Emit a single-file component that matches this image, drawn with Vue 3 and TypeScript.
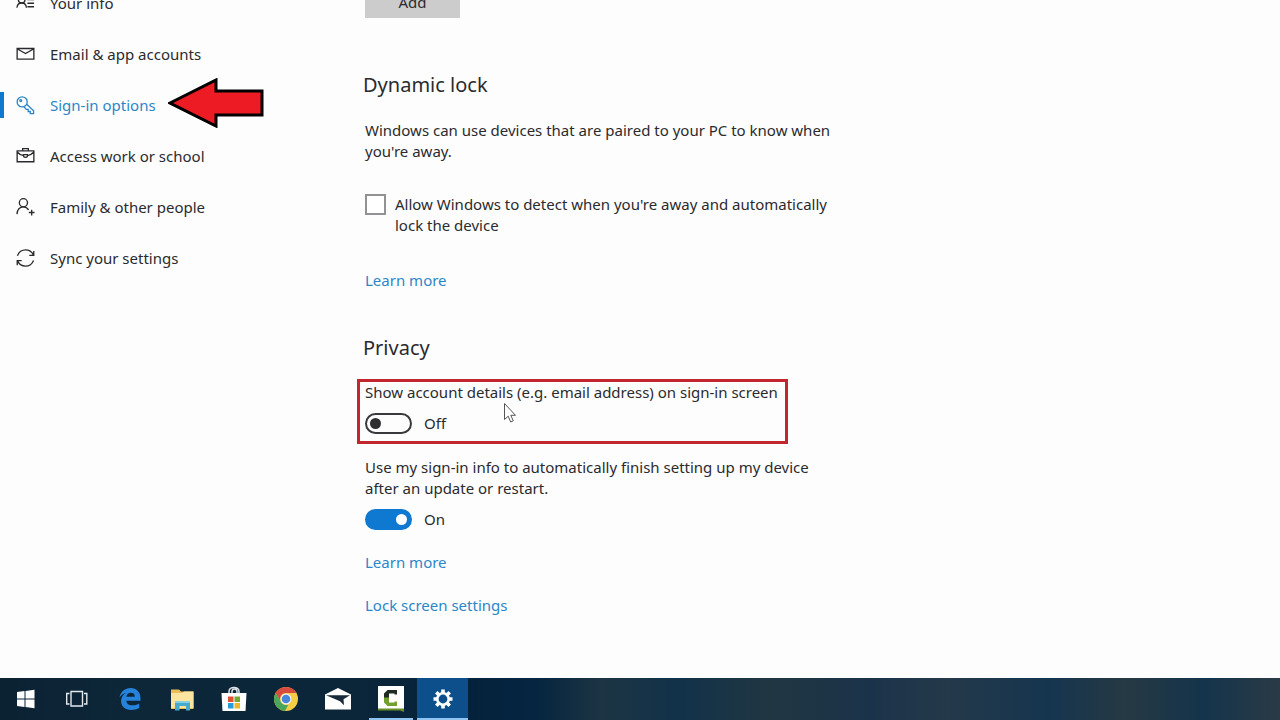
<script setup lang="ts">
import { ref } from 'vue'

interface NavEntry {
  id: string
  label: string
}

const entries: NavEntry[] = [
  { id: 'info', label: 'Your info' },
  { id: 'mail', label: 'Email & app accounts' },
  { id: 'signin', label: 'Sign-in options' },
  { id: 'work', label: 'Access work or school' },
  { id: 'family', label: 'Family & other people' },
  { id: 'sync', label: 'Sync your settings' },
]

const current = ref('signin')
const dynamicLock = ref(false)
const showDetails = ref(false)
const useSignIn = ref(true)
</script>

<template>
  <div class="screen">
    <div class="window">
      <nav class="sidebar" aria-label="Accounts">
        <a
          v-for="entry in entries"
          :key="entry.id"
          href="#"
          class="nav-item"
          :class="{ active: current === entry.id }"
          @click.prevent="current = entry.id"
        >
          <svg class="nav-icon" viewBox="0 0 20 20" aria-hidden="true">
            <g v-if="entry.id === 'info'">
              <circle cx="6" cy="6" r="3.500" />
              <path d="M1 14.500c.3-3 2-5 5-5s4.700 2 5 5M12 6h7M12 9.700h7M12 13.400h7" />
            </g>
            <g v-else-if="entry.id === 'mail'">
              <path d="M1.200 3.700h17.600v11.200H1.200zM1.500 4.200L10 9l8.500-4.800" />
            </g>
            <g v-else-if="entry.id === 'signin'">
              <circle cx="6.500" cy="6.200" r="5.300" />
              <circle cx="5" cy="4.800" r="1" />
              <path d="M11.300 8.700l7.200 6.800v3h-3.500v-2.200h-2.200v-2.200h-2l-2.300-2.600" />
            </g>
            <g v-else-if="entry.id === 'work'">
              <path d="M1.200 4h17.600v11.500H1.200zM7 4V1.700h6V4M1.500 5.500c2.200 2.500 4 3.200 6.500 3.500M18.500 5.500c-2.200 2.500-4 3.200-6.500 3.500M8 8h4v2c-1 1-3 1-4 0z" />
            </g>
            <g v-else-if="entry.id === 'family'">
              <circle cx="7.800" cy="5" r="4.300" />
              <path d="M1 17c.4-4.800 2.900-7.700 6.800-7.700 2.400 0 4.300 1.200 5.400 3.400M16.500 12.300v6M13.500 15.300h6" />
            </g>
            <g v-else>
              <path d="M1.500 7C3 3.300 6 1 10 1c3.700 0 6.700 2 8.300 5.200M18.700 2v4.700h-4.700M18.500 12c-1.500 3.700-4.500 6-8.500 6-3.700 0-6.700-2-8.300-5.200M1.300 17v-4.700H6" />
            </g>
          </svg>
          <span>{{ entry.label }}</span>
          <svg v-if="entry.id === 'signin'" class="arrow" viewBox="0 0 96 50" aria-hidden="true">
            <path d="M2 25L48 2v11h46v24H48v11z" />
          </svg>
        </a>
      </nav>

      <main class="content">
        <button type="button" class="add">Add</button>

        <section class="lock">
          <h2>Dynamic lock</h2>
          <p class="lead">Windows can use devices that are paired to your PC to know when you're away.</p>
          <label class="check">
            <input v-model="dynamicLock" type="checkbox" />
            <span>Allow Windows to detect when you're away and automatically lock the device</span>
          </label>
          <a class="link" href="#">Learn more</a>
        </section>

        <section class="privacy">
          <h2>Privacy</h2>
          <div class="highlight">
            <label for="details">Show account details (e.g. email address) on sign-in screen</label>
            <div class="switch-row">
              <input id="details" v-model="showDetails" class="switch" type="checkbox" role="switch" />
              <span>{{ showDetails ? 'On' : 'Off' }}</span>
            </div>
            <svg class="pointer" viewBox="0 0 14 22" aria-hidden="true">
              <path d="M1.500 1.500v16l3.700-3.300 2.500 5.800 2.600-1.200-2.500-5.500h4.700z" />
            </svg>
          </div>
          <div class="setting">
            <label for="finish">Use my sign-in info to automatically finish setting up my device after an update or restart.</label>
            <div class="switch-row">
              <input id="finish" v-model="useSignIn" class="switch" type="checkbox" role="switch" />
              <span>{{ useSignIn ? 'On' : 'Off' }}</span>
            </div>
          </div>
          <a class="link" href="#">Learn more</a>
          <a class="link" href="#">Lock screen settings</a>
        </section>
      </main>
    </div>

    <footer class="taskbar">
      <button type="button" aria-label="Start">
        <svg viewBox="0 0 28 28">
          <path fill="#fff" d="M5 7l7.500-1v7.500H5zM13.500 5.900L22.500 4.700v8.800h-9zM5 14.500h7.500V22L5 21zM13.500 14.500h9v8.800l-9-1.200z" />
        </svg>
      </button>
      <button type="button" aria-label="Task view">
        <svg viewBox="0 0 28 28">
          <path fill="none" stroke="#e4e9ee" stroke-width="1.400" d="M7 6.500h11.500v14.500H7zM5.500 8.500H2.700v10.500h2.800M20 8.500h2.800v10.500H20" />
        </svg>
      </button>
      <button type="button" aria-label="Edge">
        <svg viewBox="0 0 28 28">
          <path fill="#2583dc" d="M3.500 12.500C4.700 6.500 9 3 14.500 3c6.300 0 10 4.300 10 10.200v2.600H10.300c.2 3.200 2.700 4.500 6 4.500 2.500 0 4.900-.7 6.900-1.900v4.700c-2.200 1.200-4.900 1.900-7.900 1.900-6.300 0-10.200-3.500-10.200-9 0-3.600 1.900-6.500 5.200-8.200-3 .6-5.200 2.300-6.800 4.700zm6.900-.7h8.400c0-2.600-1.400-4-3.900-4-2.400 0-4 1.400-4.500 4z" />
        </svg>
      </button>
      <button type="button" aria-label="File Explorer">
        <svg viewBox="0 0 28 28">
          <path fill="#e9bd58" d="M3 4.500h8l2 2h12.500V24H3z" />
          <path fill="#fbe3a0" d="M3 8h11l2-1.500h9.500V23H3z" />
          <path fill="#45aacb" d="M7 16h15v9.500h-4v-4.500h-6.500v4.500H7z" />
          <path fill="#80d1e5" d="M7 16h15v2H7z" />
        </svg>
      </button>
      <button type="button" aria-label="Store">
        <svg viewBox="0 0 28 28">
          <path fill="none" stroke="#dce4e9" stroke-width="1.500" d="M9 9V6.500C9 1 19 1 19 6.500V9M12 8V6.500c0-3.500 5-3.500 5 0V8" />
          <path fill="#fff" d="M1.500 8h25l-1 18h-23z" />
          <path fill="#df5132" d="M8 11.500h5.500V17H8z" />
          <path fill="#73aa36" d="M14.500 11.500H20V17h-5.500z" />
          <path fill="#279bd5" d="M8 18h5.500v5.500H8z" />
          <path fill="#edb82c" d="M14.500 18H20v5.500h-5.500z" />
        </svg>
      </button>
      <button type="button" aria-label="Chrome">
        <svg viewBox="0 0 28 28">
          <circle cx="14" cy="14" r="12" fill="#f4cd45" />
          <path fill="#d84b3e" d="M3.600 8A12 12 0 0 1 24.400 8H14a6 6 0 0 0-5.200 9z" />
          <path fill="#4ba65c" d="M3.600 8l5.200 9a6 6 0 0 0 7.600 2.500L13 26A12 12 0 0 1 3.600 8z" />
          <circle cx="14" cy="14" r="5.500" fill="#f2f4f5" />
          <circle cx="14" cy="14" r="4.300" fill="#4b86dd" />
        </svg>
      </button>
      <button type="button" aria-label="Mail">
        <svg viewBox="0 0 28 28">
          <path fill="#fff" d="M1 9.500L14 3l13 6.500v15H1z" />
          <path fill="#172a3a" d="M2 10.300h24l-6.500 4 .5 6-4-4z" />
        </svg>
      </button>
      <button type="button" class="running" aria-label="Camtasia">
        <svg viewBox="0 0 28 28">
          <path fill="#fff" d="M1 1h26v23H1z" />
          <path fill="#668f27" d="M1 23.500h26V27l-4-1.500H1z" />
          <path fill="#1f2c22" d="M10.500 5H20v4.500h-2.500V8.500H12v4.500H7V8.500z" />
          <path fill="#72a030" d="M7 12.500h5v5h5.500v-1H20V21h-9.500L7 17.500z" />
        </svg>
      </button>
      <button type="button" class="running selected" aria-label="Settings">
        <svg viewBox="0 0 28 28">
          <circle cx="14" cy="14" r="5.700" fill="none" stroke="#fff" stroke-width="2.600" />
          <path fill="none" stroke="#fff" stroke-width="3.600" d="M14 8V4.500M14 20v3.500M8 14H4.500M20 14h3.500M9.800 9.800L7.300 7.300M18.200 18.200l2.500 2.500M9.800 18.200l-2.500 2.500M18.200 9.800l2.500-2.500" />
        </svg>
      </button>
    </footer>
  </div>
</template>

<style>
body {
  margin: 0;
}
</style>

<style scoped>
.screen {
  display: flex;
  flex-direction: column;
  height: 100vh;
  overflow: hidden;
  background: #fdfdfe;
  color: #2b2b2d;
  font: 15px/21px "Noto Sans", "Open Sans", sans-serif;
}

.window {
  display: flex;
  flex: 1;
  min-height: 0;
  overflow: hidden;
}

/* Both panes are scrolled part of the way down. */
.sidebar {
  flex: 0 0 365px;
  margin-top: -22px;
}

.nav-item {
  position: relative;
  display: flex;
  align-items: center;
  gap: 15px;
  height: 51px;
  padding-left: 16px;
  color: inherit;
  text-decoration: none;
}

.nav-item.active {
  color: #2b87c8;
}

.nav-item.active::before {
  content: "";
  position: absolute;
  left: 0;
  top: 12px;
  width: 4px;
  height: 26px;
  background: #0f78d0;
}

.nav-icon {
  width: 19px;
  height: 19px;
  fill: none;
  stroke: currentColor;
  stroke-width: 1.400;
}

.arrow {
  position: absolute;
  left: 168px;
  top: -2px;
  width: 96px;
  height: 50px;
  fill: #ed1c24;
  stroke: #000;
  stroke-width: 3;
}

.content {
  flex: 0 1 475px;
  margin-top: -14px;
}

.add {
  display: block;
  width: 95px;
  height: 32px;
  padding: 0;
  border: 0;
  background: #cccccd;
  color: inherit;
  font: inherit;
}

h2 {
  margin: 0 0 0 -2px;
  font-size: 20px;
  line-height: 28px;
  font-weight: 400;
}

p {
  margin: 0;
}

.lock {
  margin-top: 53px;
}

.lead {
  margin-top: 21px;
}

.check {
  display: flex;
  gap: 9px;
  margin-top: 32px;
}

.check input {
  appearance: none;
  flex: none;
  box-sizing: border-box;
  width: 21px;
  height: 21px;
  margin: 0;
  border: 2px solid #929294;
  background: #fff;
}

.check input:checked {
  background: #0f78d0;
}

.link {
  display: block;
  width: fit-content;
  margin-top: 22px;
  color: #2b87c8;
  text-decoration: none;
}

.lock .link {
  margin-top: 34px;
}

.privacy {
  margin-top: 43px;
}

.highlight {
  position: relative;
  width: fit-content;
  margin: 17px 0 0 -8px;
  padding: 0 7px 7px 5px;
  border: 3px solid #c1272d;
}

.highlight label,
.setting label {
  display: block;
}

.switch-row {
  display: flex;
  align-items: center;
  gap: 12px;
  margin-top: 10px;
}

.setting {
  margin-top: 13px;
}

.switch {
  appearance: none;
  display: flex;
  align-items: center;
  box-sizing: border-box;
  width: 47px;
  height: 21px;
  margin: 0;
  padding: 0 3px;
  border: 2px solid #39393b;
  border-radius: 11px;
}

.switch::before {
  content: "";
  width: 11px;
  height: 11px;
  border-radius: 50%;
  background: #2f2f31;
}

.switch:checked {
  justify-content: flex-end;
  border-color: #0f78d0;
  background: #0f78d0;
}

.switch:checked::before {
  background: #fff;
}

.pointer {
  position: absolute;
  left: 143px;
  top: 20px;
  width: 14px;
  height: 22px;
  fill: #fff;
  stroke: #555558;
  stroke-width: 1;
}

.taskbar {
  display: flex;
  flex: 0 0 42px;
  background: linear-gradient(90deg, #0b2233 0%, #0d2739 12%, #0b2539 28%, #04223c 37%, #062540 42%, #1c3443 47%, #12324a 53%, #203642 60%, #1b334a 68%, #24394a 74%, #15354f 82%, #263943 88%, #14344c 94%, #2a3b45 100%);
}

.taskbar button {
  display: flex;
  align-items: center;
  justify-content: center;
  width: 52px;
  padding: 0;
  border: 0;
  background: transparent;
}

.taskbar svg {
  width: 28px;
  height: 28px;
}

.taskbar .running {
  border-bottom: 2px solid #8fc4f2;
  padding-top: 2px;
}

.taskbar .running:not(.selected) {
  width: 44px;
  margin: 0 5px;
}

.taskbar .selected {
  width: 51px;
  margin-left: -1px;
  background: #0c4f8b;
}
</style>
